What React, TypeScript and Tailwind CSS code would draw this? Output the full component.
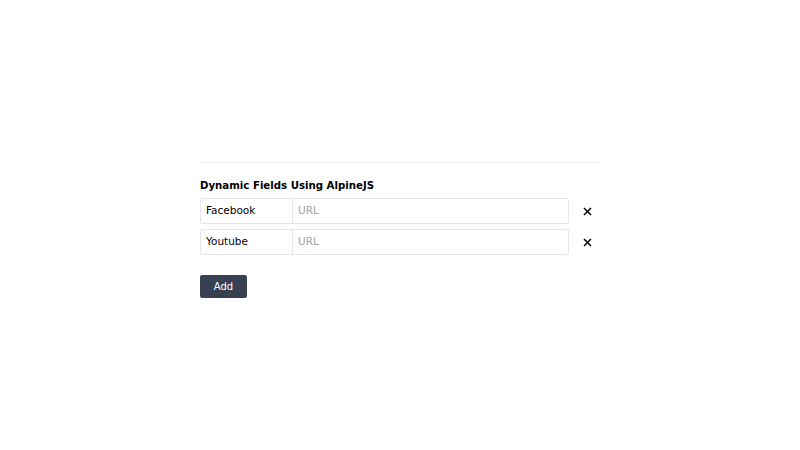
export default function App() {
  const fields = [
    { label: "Facebook", url: "" },
    { label: "Youtube", url: "" },
  ];

  return (
    <div
      className="flex h-[450px] w-[800px] justify-center bg-white pt-[162px] text-black"
      style={{ fontFamily: '"DejaVu Sans", sans-serif' }}
    >
      <div className="w-[400px]">
        <div className="h-px w-full bg-[#f1f1f1]" />
        <h2 className="mt-[16px] text-[10.2px] font-bold leading-[14px]">
          Dynamic Fields Using AlpineJS
        </h2>
        <div className="mt-[5px] flex flex-col gap-[5px]">
          {fields.map((f, i) => (
            <div key={i} className="flex items-center">
              <div className="flex h-[26px] w-[369px] rounded-[2px] border border-[#e5e7eb]">
                <div className="flex w-[92px] items-center border-r border-[#e5e7eb] px-[5px] text-[10.5px]">
                  {f.label}
                </div>
                <input
                  className="flex-1 bg-transparent px-[5px] text-[10.5px] outline-none placeholder:text-[#a3a3a3]"
                  placeholder="URL"
                  defaultValue={f.url}
                />
              </div>
              <button className="ml-[13px] flex h-[10px] w-[10px] items-center justify-center">
                <svg width="9" height="9" viewBox="0 0 9 9">
                  <path d="M1 1L8 8M8 1L1 8" stroke="#000" strokeWidth="1.5" />
                </svg>
              </button>
            </div>
          ))}
        </div>
        <button className="mt-[20px] h-[23px] w-[47px] rounded-[2px] bg-[#374151] text-[10px] text-white">
          Add
        </button>
      </div>
    </div>
  );
}
